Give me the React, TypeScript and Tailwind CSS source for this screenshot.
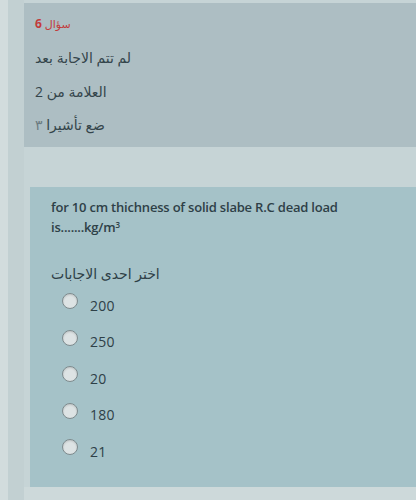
const answers = ['200', '250', '20', '180', '21']

function Radio() {
  return (
    <span className="block h-[16px] w-[16px] shrink-0 rounded-full border border-[#7d8a8d] bg-[#dde3e4] shadow-[inset_0_1px_2px_rgba(0,0,0,0.15)]" />
  )
}

export default function App() {
  return (
    <div className="flex h-[500px] w-[416px] overflow-hidden bg-[#c6d4d6] font-['Open_Sans','DejaVu_Sans',sans-serif]">
      <div className="flex w-[24px] shrink-0">
        <div className="w-[8px] bg-[#d2dcdd]" />
        <div className="flex-1 bg-[#c2d0d2]" />
      </div>
      <div className="flex flex-1 flex-col">
        <div className="mt-[3px] flex h-[144px] flex-col bg-[#adbec3] pl-[11px] pt-[13px] text-[#34454b]">
          <p dir="rtl" className="text-left text-[11px] leading-[16px] text-[#c23b3b]">
            سؤال <b className="text-[12px]">6</b>
          </p>
          <p dir="rtl" className="mt-[17px] text-left text-[14px] leading-[18px]">
            لم تتم الاجابة بعد
          </p>
          <p dir="rtl" className="mt-[16px] text-left text-[14px] leading-[18px]">
            العلامة من 2
          </p>
          <p dir="rtl" className="mt-[15px] text-left text-[14px] leading-[18px]">
            ضع تأشيرا <span className="text-[#6b7b80]">٣</span>
          </p>
        </div>
        <div className="ml-[6px] mt-[40px] flex h-[300px] flex-col bg-[#a5c2c8] pl-[21px] pt-[10px] text-[#2e4047]">
          <p className="text-[13px] font-semibold leading-[20px] tracking-[-0.2px]">
            for 10 cm thichness of solid slabe R.C dead load
            <br />
            is.......kg/m<sup className="text-[8px]">3</sup>
          </p>
          <p dir="rtl" className="mt-[28px] text-left text-[14px] leading-[18px]">
            اختر احدى الاجابات
          </p>
          <div className="mt-[10px] flex flex-col gap-[20.5px] pl-[11px]">
            {answers.map((a) => (
              <div key={a} className="flex h-[16px] items-center gap-[12px]">
                <Radio />
                <span className="mt-[9px] text-[14px] leading-[16px] tracking-[0.3px]">{a}</span>
              </div>
            ))}
          </div>
        </div>
        <div className="flex-1 bg-[#cdd9da]" />
      </div>
    </div>
  )
}
